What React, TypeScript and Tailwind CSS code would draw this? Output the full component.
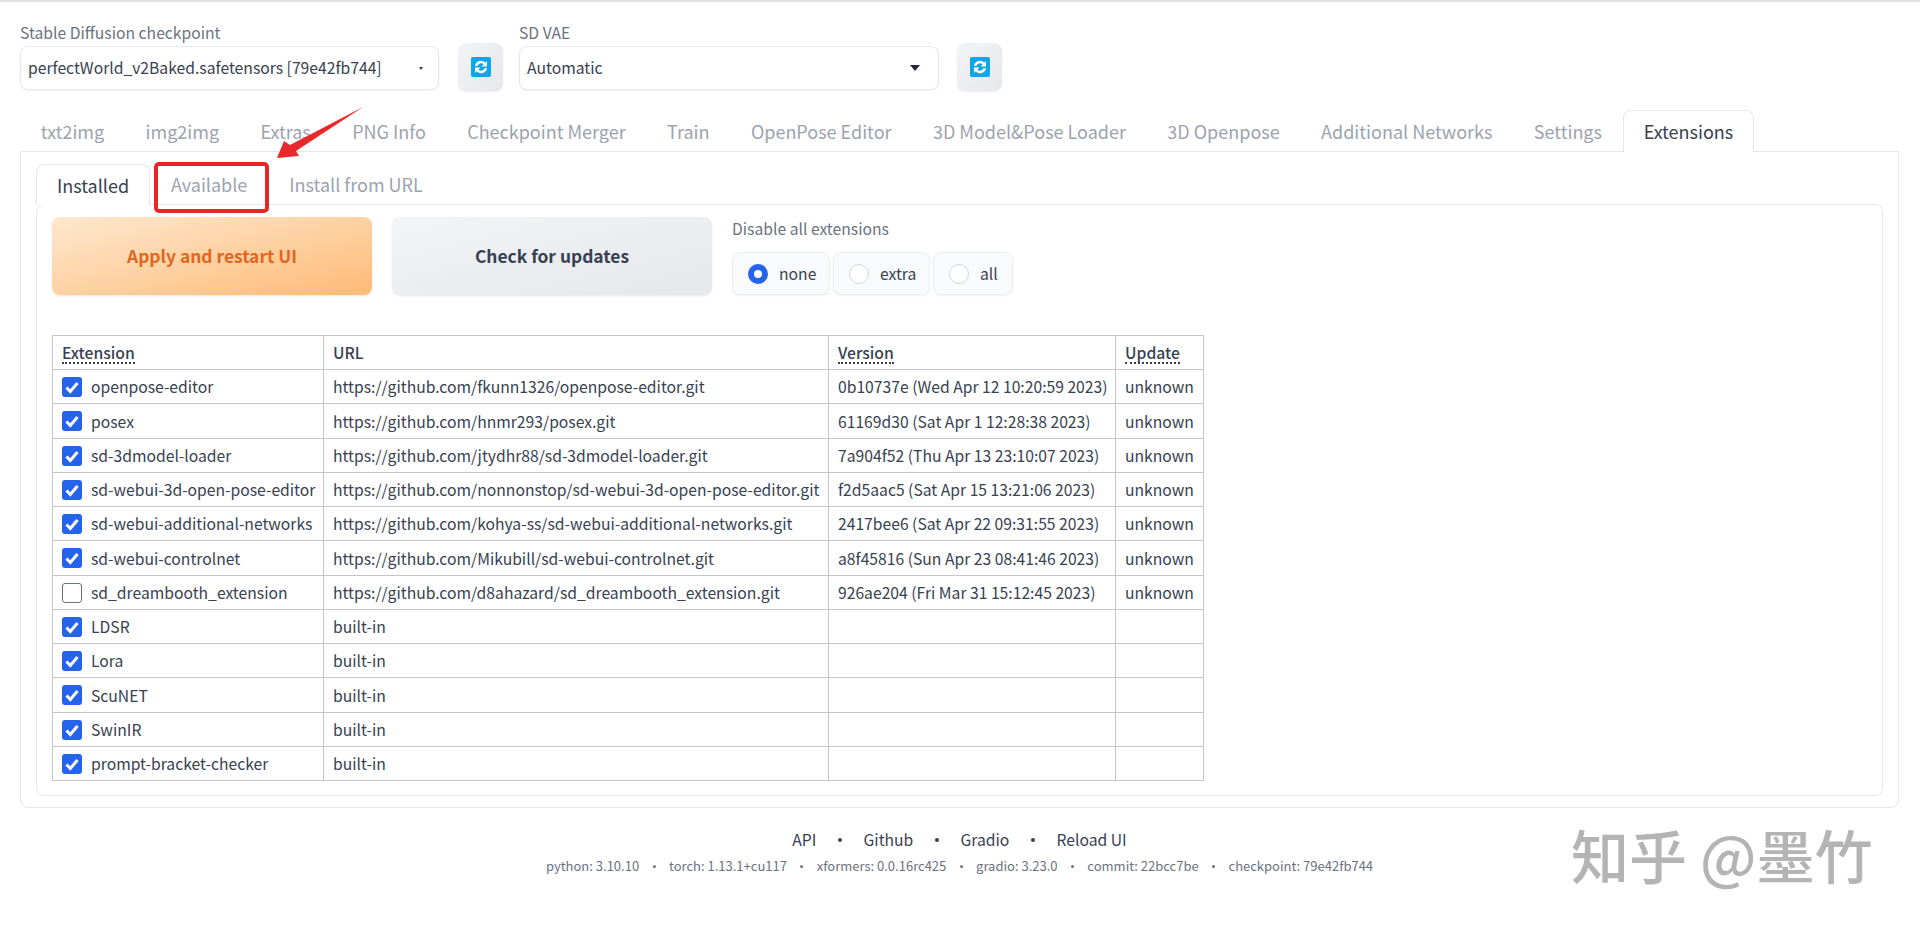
import React from "react";

const FONT = "font-['Noto_Sans_CJK_SC','Noto_Sans',sans-serif]";

const rows: [string, string, string, string, boolean][] = [
  ["openpose-editor", "https://github.com/fkunn1326/openpose-editor.git", "0b10737e (Wed Apr 12 10:20:59 2023)", "unknown", true],
  ["posex", "https://github.com/hnmr293/posex.git", "61169d30 (Sat Apr 1 12:28:38 2023)", "unknown", true],
  ["sd-3dmodel-loader", "https://github.com/jtydhr88/sd-3dmodel-loader.git", "7a904f52 (Thu Apr 13 23:10:07 2023)", "unknown", true],
  ["sd-webui-3d-open-pose-editor", "https://github.com/nonnonstop/sd-webui-3d-open-pose-editor.git", "f2d5aac5 (Sat Apr 15 13:21:06 2023)", "unknown", true],
  ["sd-webui-additional-networks", "https://github.com/kohya-ss/sd-webui-additional-networks.git", "2417bee6 (Sat Apr 22 09:31:55 2023)", "unknown", true],
  ["sd-webui-controlnet", "https://github.com/Mikubill/sd-webui-controlnet.git", "a8f45816 (Sun Apr 23 08:41:46 2023)", "unknown", true],
  ["sd_dreambooth_extension", "https://github.com/d8ahazard/sd_dreambooth_extension.git", "926ae204 (Fri Mar 31 15:12:45 2023)", "unknown", false],
  ["LDSR", "built-in", "", "", true],
  ["Lora", "built-in", "", "", true],
  ["ScuNET", "built-in", "", "", true],
  ["SwinIR", "built-in", "", "", true],
  ["prompt-bracket-checker", "built-in", "", "", true],
];

const tabs = ["txt2img", "img2img", "Extras", "PNG Info", "Checkpoint Merger", "Train", "OpenPose Editor", "3D Model&Pose Loader", "3D Openpose", "Additional Networks", "Settings"];

function Refresh({ ml }: { ml: string }) {
  return (
    <button className={`${ml} w-[45px] h-[48px] rounded-lg bg-gradient-to-br from-[#f3f4f6] to-[#e5e7eb] shadow-[0_1px_2px_rgba(0,0,0,0.08)] flex items-center justify-center shrink-0`}>
      <svg width="20" height="20" viewBox="0 0 20 20">
        <rect width="20" height="20" rx="2" fill="#0ea5e9" />
        <g transform="translate(10 10) scale(1.2) translate(-10 -10)">
          <path d="M5 9a5 5 0 0 1 8.6-2.6L15 5v4.5h-4.5l1.7-1.7A3.2 3.2 0 0 0 7 9.2Z" fill="#fff" />
          <path d="M15 11a5 5 0 0 1-8.6 2.6L5 15v-4.5h4.5l-1.7 1.7a3.2 3.2 0 0 0 5.2-1.4Z" fill="#fff" />
        </g>
      </svg>
    </button>
  );
}

function Select({ value, w, small }: { value: string; w: string; small?: boolean }) {
  return (
    <div className={`${w} h-[44px] mt-[3px] rounded-lg border border-[#e5e7eb] bg-white shadow-[0_1px_2px_rgba(0,0,0,0.05)] flex items-center justify-between pl-[7px] ${small ? "pr-[15px]" : "pr-[18px]"} text-[15.7px] text-[#374151]`}>
      <span>{value}</span>
      {small ? (
        <span className="w-0 h-0 border-x-[2.5px] border-x-transparent border-t-[3px] border-t-[#374151]" />
      ) : (
        <span className="w-0 h-0 border-x-[5px] border-x-transparent border-t-[6px] border-t-[#1f2937]" />
      )}
    </div>
  );
}

function Check({ on }: { on: boolean }) {
  return on ? (
    <svg width="20" height="20" viewBox="0 0 20 20" className="shrink-0">
      <rect width="20" height="20" rx="3" fill="#2563eb" />
      <path d="M4.5 10.5 8.3 14.5 15.5 6" fill="none" stroke="#fff" strokeWidth="3" />
    </svg>
  ) : (
    <span className="w-[20px] h-[20px] rounded-[3px] border border-[#6b7280] bg-white shrink-0" />
  );
}

function Radio({ label, on, w }: { label: string; on?: boolean; w: string }) {
  return (
    <div className={`${w} h-[43px] rounded-lg border border-[#eceef1] bg-[#f9fafb] shadow-[0_1px_2px_rgba(0,0,0,0.06)] flex items-center pl-[15px] gap-[11px] text-[15.7px] text-[#374151]`}>
      {on ? (
        <span className="w-[20px] h-[20px] rounded-full border-[6px] border-[#2563eb] bg-white" />
      ) : (
        <span className="w-[20px] h-[20px] rounded-full border border-[#d1d5db] bg-white" />
      )}
      <span>{label}</span>
    </div>
  );
}

function Dot() {
  return <span className="mx-[21.6px] w-[4px] h-[4px] rounded-full bg-[#374151]" />;
}

function SmallDot() {
  return <span className="mx-[13.4px] w-[3px] h-[3px] rounded-full bg-[#6b7280]" />;
}

export default function App() {
  const td = "border border-[#c4c7cc] px-[9px] pt-[1px] pb-0 h-[34.25px] whitespace-nowrap text-[15.7px] leading-none text-[#374151]";
  const th = "border border-[#c4c7cc] px-[9px] h-[34px] py-0 text-left font-medium text-[15.7px] text-[#374151]";
  return (
    <div className={`${FONT} relative w-[1920px] h-[932px] overflow-hidden bg-white border-t-2 border-[#dfe1e4]`}>
      <div className="pl-[20px] pr-[21px] pt-[21px]">
        <div className="flex">
          <div>
            <div className="text-[15.7px] leading-[20px] text-[#6b7280]">Stable Diffusion checkpoint</div>
            <Select value="perfectWorld_v2Baked.safetensors [79e42fb744]" w="w-[419px]" small />
          </div>
          <div className="pt-[20px]"><Refresh ml="ml-[19px]" /></div>
          <div className="ml-[16px]">
            <div className="text-[15.7px] leading-[20px] text-[#6b7280]">SD VAE</div>
            <Select value="Automatic" w="w-[420px]" />
          </div>
          <div className="pt-[20px]"><Refresh ml="ml-[18px]" /></div>
        </div>

        <div className="flex h-[41px] mt-[19px] items-stretch text-[18px]">
          {tabs.map((t) => (
            <div key={t} className="px-[20.7px] pt-[1px] flex items-center text-[#9ca3af] whitespace-nowrap">{t}</div>
          ))}
          <div className="px-[20px] flex items-center text-[#374151] bg-white border border-b-0 border-[#e5e7eb] rounded-t-lg -mb-px relative z-10 whitespace-nowrap">Extensions</div>
        </div>

        <div className="border border-[#e5e7eb] rounded-b-lg h-[657px] px-[15px] pt-[12px]">
          <div className="flex h-[40px] items-stretch text-[18px]">
            <div className="w-[114px] flex items-center justify-center text-[#374151] bg-white border border-b-0 border-[#e5e7eb] rounded-t-lg -mb-px relative z-10">Installed</div>
            <div className="px-[21px] flex items-center text-[#9ca3af]">Available</div>
            <div className="px-[21px] flex items-center text-[#9ca3af]">Install from URL</div>
          </div>
          <div className="border border-[#e5e7eb] rounded-lg h-[592px] px-[15px] pt-[12px]">
            <div className="flex">
              <button className="w-[320px] h-[78px] rounded-lg bg-gradient-to-br from-[#fde8cf] to-[#fdba74] shadow-[0_1px_2px_rgba(0,0,0,0.1)] text-[17.4px] font-semibold text-[#de681f]">Apply and restart UI</button>
              <button className="w-[320px] h-[78px] ml-[20px] rounded-lg bg-gradient-to-br from-[#f3f4f6] to-[#e5e7eb] shadow-[0_1px_2px_rgba(0,0,0,0.1)] text-[17.4px] font-semibold text-[#374151]">Check for updates</button>
              <div className="ml-[20px]">
                <div className="text-[15.7px] leading-[20px] text-[#6b7280] mt-[2px]">Disable all extensions</div>
                <div className="flex gap-[3px] mt-[13px]">
                  <Radio label="none" on w="w-[98px]" />
                  <Radio label="extra" w="w-[97px]" />
                  <Radio label="all" w="w-[80px]" />
                </div>
              </div>
            </div>
            <table className="mt-[40px] border-collapse table-fixed w-[1151px]">
              <colgroup>
                <col className="w-[271px]" />
                <col className="w-[505px]" />
                <col className="w-[287px]" />
                <col className="w-[88px]" />
              </colgroup>
              <thead>
                <tr>
                  <th className={th}><span className="border-b-2 border-dotted border-[#374151] leading-[18px] inline-block">Extension</span></th>
                  <th className={th}>URL</th>
                  <th className={th}><span className="border-b-2 border-dotted border-[#374151] leading-[18px] inline-block">Version</span></th>
                  <th className={th}><span className="border-b-2 border-dotted border-[#374151] leading-[18px] inline-block">Update</span></th>
                </tr>
              </thead>
              <tbody>
                {rows.map((r) => (
                  <tr key={r[0]}>
                    <td className={td}>
                      <div className="flex items-center gap-[9px]"><Check on={r[4]} /><span>{r[0]}</span></div>
                    </td>
                    <td className={td}>{r[1]}</td>
                    <td className={td}>{r[2]}</td>
                    <td className={td}>{r[3]}</td>
                  </tr>
                ))}
              </tbody>
            </table>
          </div>
        </div>

        <div className="mt-[22px] flex flex-col items-center">
          <div className="flex items-center text-[15.7px] leading-[20px] text-[#374151]">
            <span>API</span><Dot />
            <span>Github</span><Dot />
            <span>Gradio</span><Dot />
            <span>Reload UI</span>
          </div>
          <div className="flex items-center mt-[7px] text-[13px] leading-[18px] text-[#6b7280]">
            <span>python: 3.10.10</span><SmallDot />
            <span>torch: 1.13.1+cu117</span><SmallDot />
            <span>xformers: 0.0.16rc425</span><SmallDot />
            <span>gradio: 3.23.0</span><SmallDot />
            <span>commit: 22bcc7be</span><SmallDot />
            <span>checkpoint: 79e42fb744</span>
          </div>
        </div>
      </div>

      <div className="absolute left-[154px] top-[160px] w-[115px] h-[51px] border-4 border-[#e8262a] rounded-[5px]" />
      <svg className="absolute left-[270px] top-[100px]" width="100" height="60" viewBox="0 0 100 60">
        <path d="M93 5 L26 49 L29 54 L7 56 L14 39 L20 43 Z" fill="#e8282a" />
      </svg>
      <div className="absolute left-[1571px] top-[814px] text-[58px] leading-[76px] text-[#b4b4b4] whitespace-nowrap font-medium">知乎 @墨竹</div>
    </div>
  );
}
